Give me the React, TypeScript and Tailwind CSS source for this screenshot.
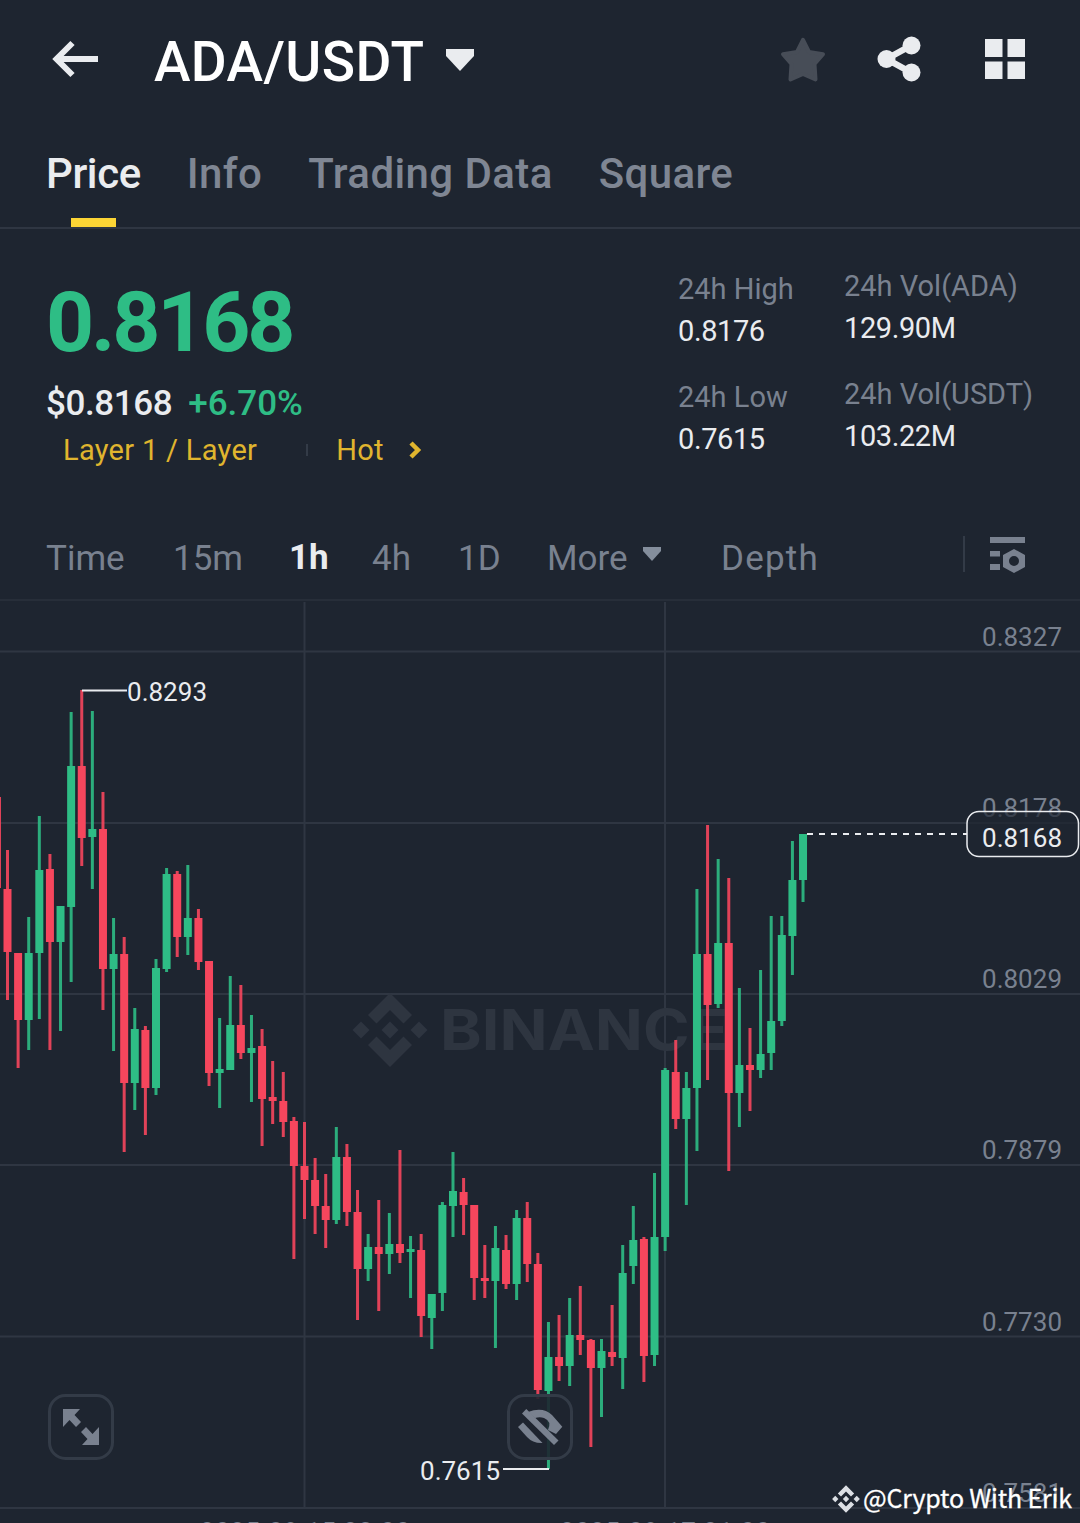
type Candle = [number, number, number, number, 0 | 1];

// [high, body top, body bottom, low, up] as chart y values
const candles: Candle[] = [
  [797, 797, 888, 888, 0],
  [850, 889, 952, 1000, 0],
  [953, 953, 1020, 1068, 0],
  [917, 953, 1020, 1050, 1],
  [816, 870, 953, 1019, 1],
  [854, 869, 942, 1050, 0],
  [906, 906, 942, 1031, 1],
  [712, 766, 907, 982, 1],
  [690, 766, 838, 866, 0],
  [711, 829, 837, 889, 1],
  [792, 829, 969, 1010, 0],
  [918, 954, 969, 1051, 1],
  [937, 954, 1083, 1152, 0],
  [1008, 1029, 1083, 1110, 1],
  [1026, 1030, 1088, 1135, 0],
  [959, 968, 1088, 1095, 1],
  [868, 874, 969, 972, 1],
  [871, 874, 937, 957, 0],
  [865, 918, 937, 955, 1],
  [909, 918, 962, 970, 0],
  [961, 961, 1073, 1086, 0],
  [1018, 1069, 1073, 1108, 1],
  [976, 1025, 1070, 1070, 1],
  [985, 1025, 1053, 1059, 0],
  [1015, 1048, 1053, 1102, 1],
  [1029, 1046, 1099, 1146, 0],
  [1061, 1097, 1101, 1124, 0],
  [1072, 1101, 1122, 1137, 0],
  [1117, 1121, 1166, 1259, 0],
  [1122, 1166, 1180, 1219, 0],
  [1158, 1180, 1206, 1234, 0],
  [1174, 1206, 1220, 1248, 0],
  [1127, 1157, 1220, 1224, 1],
  [1144, 1157, 1212, 1226, 0],
  [1190, 1212, 1269, 1320, 0],
  [1234, 1247, 1269, 1281, 1],
  [1200, 1247, 1254, 1311, 0],
  [1213, 1244, 1254, 1274, 1],
  [1150, 1244, 1253, 1263, 0],
  [1236, 1249, 1252, 1298, 1],
  [1234, 1250, 1316, 1337, 0],
  [1294, 1294, 1318, 1349, 1],
  [1202, 1205, 1293, 1311, 1],
  [1152, 1191, 1206, 1237, 1],
  [1178, 1192, 1205, 1235, 0],
  [1205, 1205, 1278, 1300, 0],
  [1245, 1278, 1281, 1298, 0],
  [1226, 1248, 1281, 1348, 1],
  [1235, 1250, 1284, 1289, 0],
  [1210, 1218, 1284, 1300, 1],
  [1202, 1218, 1264, 1282, 0],
  [1253, 1264, 1390, 1399, 0],
  [1322, 1357, 1391, 1469, 1],
  [1315, 1357, 1366, 1381, 0],
  [1298, 1335, 1366, 1386, 1],
  [1286, 1335, 1340, 1355, 0],
  [1339, 1340, 1368, 1447, 0],
  [1339, 1351, 1368, 1417, 1],
  [1305, 1352, 1357, 1366, 0],
  [1245, 1273, 1358, 1389, 1],
  [1206, 1240, 1266, 1284, 1],
  [1237, 1239, 1356, 1382, 0],
  [1173, 1237, 1355, 1366, 1],
  [1068, 1070, 1237, 1251, 1],
  [1040, 1072, 1119, 1129, 0],
  [1072, 1088, 1119, 1205, 1],
  [889, 954, 1088, 1151, 1],
  [825, 954, 1005, 1080, 0],
  [859, 943, 1004, 1008, 1],
  [878, 943, 1093, 1171, 0],
  [988, 1065, 1093, 1127, 1],
  [1028, 1065, 1070, 1111, 0],
  [970, 1054, 1070, 1078, 1],
  [916, 1021, 1053, 1070, 1],
  [916, 935, 1021, 1026, 1],
  [841, 880, 936, 975, 1],
  [834, 834, 880, 902, 1],
];

const gridLines = [
  { y: 651.5, label: '0.8327' },
  { y: 823, label: '0.8178' },
  { y: 994, label: '0.8029' },
  { y: 1165, label: '0.7879' },
  { y: 1336.5, label: '0.7730' },
  { y: 1508, label: '0.7581' },
];

const tabs = ['Price', 'Info', 'Trading Data', 'Square'];

const candleX = (i: number) => 7.5 + (i - 1) * 10.607;

const BinanceMark = () => (
  <>
    <path d="M0 -37 L22 -15 L13.5 -6.5 L0 -20 L-13.5 -6.5 L-22 -15 Z" />
    <path d="M0 37 L22 15 L13.5 6.5 L0 20 L-13.5 6.5 L-22 15 Z" />
    <path d="M0 -8.5 L8.5 0 L0 8.5 L-8.5 0 Z" />
    <path d="M-29 -8.5 L-20.5 0 L-29 8.5 L-37.5 0 Z" />
    <path d="M29 -8.5 L37.5 0 L29 8.5 L20.5 0 Z" />
  </>
);

const Header = () => (
  <header className="flex h-[118px] items-center pl-[52px] pr-[55px]">
    <svg width="46" height="38" viewBox="0 0 46 38" fill="none" stroke="#eaecef" strokeWidth="6">
      <path d="M46 19H5" />
      <path d="M20.5 3L4.5 19L20.5 35" />
    </svg>
    <h1 className="ml-[56px] mt-[6px] text-[55px] font-medium leading-none tracking-[0.4px] text-white">ADA/USDT</h1>
    <svg className="ml-[22px] mt-px" width="28" height="22" viewBox="0 0 28 22" fill="#eaecef">
      <path d="M0 0H28V7L14 22L0 7Z" />
    </svg>
    <div className="ml-auto flex items-center">
      <svg className="mt-[2px]" width="46" height="46" viewBox="0 0 46 46" fill="#474d57" stroke="#474d57" strokeWidth="4" strokeLinejoin="round">
        <path d="M23 2.800L29 15L43 17.300L34.500 27L35.500 42.500L23 37L10.500 42.500L11.500 27L3 17.300L17 15Z" />
      </svg>
      <svg className="ml-[51px]" width="44" height="46" viewBox="0 0 44 46" fill="#eaecef">
        <path d="M9.500 23L35 9M9.500 23L35 37" stroke="#eaecef" strokeWidth="6.500" />
        <circle cx="9.500" cy="23" r="9" />
        <circle cx="34.500" cy="9.500" r="9" />
        <circle cx="34.500" cy="36.500" r="9" />
      </svg>
      <svg className="ml-[64px]" width="40" height="40" viewBox="0 0 40 40" fill="#eaecef">
        <path d="M0 0H17.500V18H0ZM22.500 0H40V18H22.500ZM0 22.500H17.500V40H0ZM22.500 22.500H40V40H22.500Z" />
      </svg>
    </div>
  </header>
);

const Tabs = () => (
  <nav className="flex h-[111px] gap-[46px] border-b-2 border-[#2f3642] pl-[46px] text-[42px] font-medium leading-none tracking-[0.4px] text-[#7f8693]">
    {tabs.map((tab, i) => (
      <div key={tab} className="flex flex-col items-center justify-between pt-[35px]">
        <span className={i === 0 ? 'tracking-[-0.4px] text-[#eaecef]' : ''}>{tab}</span>
        {i === 0 && <span className="h-[9px] w-[45px] bg-[#fcd535]" />}
      </div>
    ))}
  </nav>
);

const Stat = ({ label, value }: { label: string; value: string }) => (
  <div className="h-[108px] text-[29px] leading-[42px]">
    <div className="text-[#79818f]">{label}</div>
    <div className="tracking-[-0.4px] text-[#eaecef]">{value}</div>
  </div>
);

const Summary = () => (
  <section className="flex h-[285px]">
    <div className="w-[678px] pl-[46px] pt-[47px]">
      <div className="text-[84px] font-bold leading-[94px] tracking-[-3.2px] text-[#2ebd85]">0.8168</div>
      <div className="mt-[13px] flex gap-[16px] text-[35px] font-medium leading-[42px]">
        <span className="tracking-[-0.4px] text-[#eaecef]">$0.8168</span>
        <span className="text-[#2ebd85]">+6.70%</span>
      </div>
      <div className="mt-[5px] flex items-center pl-[17px] text-[29px] leading-[40px] tracking-[0.3px] text-[#e0b52e]">
        <span>Layer 1 / Layer</span>
        <span className="ml-[49px] h-[12px] w-[2px] bg-[#333b47]" />
        <span className="ml-[28px]">Hot</span>
        <svg className="ml-[25px] -mt-px" width="13" height="18" viewBox="0 0 13 18" fill="none" stroke="#e0b52e" strokeWidth="4.500">
          <path d="M2 2L9 9L2 16" />
        </svg>
      </div>
    </div>
    <div className="w-[166px] pt-[39px]">
      <Stat label="24h High" value="0.8176" />
      <Stat label="24h Low" value="0.7615" />
    </div>
    <div className="pt-[36px]">
      <Stat label="24h Vol(ADA)" value="129.90M" />
      <Stat label="24h Vol(USDT)" value="103.22M" />
    </div>
  </section>
);

const Timeframes = () => (
  <section className="flex h-[87px] items-center border-b-2 border-[#272e39] pl-[46px] pt-[4px] text-[35px] leading-none text-[#79818f]">
    <span className="w-[127px]">Time</span>
    <span className="w-[116px]">15m</span>
    <span className="-mt-[2px] w-[83px] font-bold text-[#eaecef]">1h</span>
    <span className="w-[86px]">4h</span>
    <span className="w-[89px]">1D</span>
    <span className="w-[96px]">More</span>
    <svg className="-mt-[9px]" width="18" height="14" viewBox="0 0 18 14" fill="#848e9c">
      <path d="M0 0H18V4L9 14L0 4Z" />
    </svg>
    <span className="ml-[60px] tracking-[1.2px]">Depth</span>
    <span className="ml-auto -mt-[9px] h-[36px] w-[2px] bg-[#333b47]" />
    <svg className="-mt-[7px] ml-[25px] mr-[55px]" width="35" height="36" viewBox="0 0 35 36" fill="#79818f">
      <path d="M0 0H35V6H0ZM0 14H10V19.500H0ZM0 27H10V33H0Z" />
      <path fillRule="evenodd" d="M24 12L35 18V30L24 36L13 30V18ZM24 19A5 5 0 1 0 24 29A5 5 0 1 0 24 19Z" />
    </svg>
  </section>
);

const Chart = () => (
  <svg className="block" width="1080" height="922" viewBox="0 601 1080 922" fontFamily="Roboto, sans-serif">
    <g stroke="#2f3642" strokeWidth="2">
      {gridLines.map((line) => (
        <path key={line.label} d={`M0 ${line.y}H1080`} />
      ))}
      <path d="M304.500 602V1508M665 602V1508" />
    </g>

    <g fill="#2e3540">
      <g transform="translate(390 1030)">
        <BinanceMark />
      </g>
      <text x="440" y="1050" fontFamily="Inter, sans-serif" fontSize="57" fontWeight="700" textLength="288" lengthAdjust="spacingAndGlyphs">
        BINANCE
      </text>
    </g>

    {candles.map(([high, top, bottom, low, up], i) => (
      <g key={i} fill={up ? '#2ebd85' : '#f6465d'}>
        {i > 0 && <rect x={candleX(i) - 1.5} y={high} width="3" height={low - high} opacity="0.9" />}
        <rect x={candleX(i) - 4} y={top} width="8" height={bottom - top} />
      </g>
    ))}

    <g fill="#79818f" fontSize="26">
      {gridLines.map((line) => (
        <text key={line.label} x="982" y={line.y - 6} textLength="80">
          {line.label}
        </text>
      ))}
      <text x="200" y="1541" textLength="210">2025-08-15 23:00</text>
      <text x="560" y="1541" textLength="210">2025-08-17 21:00</text>
    </g>

    {/* high / low callouts */}
    <path d="M82 690.500H127M503 1469H549" stroke="#eaecef" strokeWidth="1.800" />
    <g fill="#eaecef" fontSize="26">
      <text x="127" y="701" textLength="80">0.8293</text>
      <text x="420" y="1480" textLength="80">0.7615</text>
    </g>

    {/* last price */}
    <path d="M807 834H967" stroke="#eaecef" strokeWidth="1.800" strokeDasharray="6 6" />
    <rect x="967" y="811.500" width="111.500" height="45" rx="12" fill="#1e2530" fillOpacity="0.7" stroke="#eaecef" strokeWidth="1.500" />
    <text x="982" y="847" fill="#eaecef" fontSize="26" textLength="80">0.8168</text>

    {/* expand */}
    <rect x="49.500" y="1395.500" width="63" height="63" rx="16" fill="#1e2530" stroke="#333b47" strokeWidth="3" />
    <g fill="#79818f">
      <path d="M63 1409H80L74.500 1415L81 1422L76 1427L69.500 1420L63 1427Z" />
      <path d="M99 1445H82L87.500 1439L81 1432L86 1427L92.500 1434L99 1427Z" />
    </g>

    {/* hide */}
    <rect x="508.500" y="1395.500" width="63" height="63" rx="16" fill="#1e2530" fillOpacity="0.9" stroke="#333b47" strokeWidth="3" />
    <g fill="#79818f">
      <path d="M526.300 1409L558.500 1440.500L554 1445L522 1413.500Z" />
      <path d="M528 1412Q543 1406.500 552 1415L562.300 1426.700L556 1434L548 1430Q552 1421 544 1418Q540 1416.500 535 1418Z" />
      <path d="M523 1422.500L542.500 1443Q533 1443.500 527 1437L518 1427Z" />
    </g>

    {/* author */}
    <g fill="#dcdfe4" transform="translate(846 1499) scale(0.37)">
      <BinanceMark />
    </g>
    <text x="863" y="1508" fill="#ffffff" fontSize="25" fontFamily="'Noto Sans CJK SC', sans-serif" stroke="#ffffff" strokeWidth="0.300" textLength="209">
      @Crypto With Erik
    </text>
  </svg>
);

const App = () => {
  return (
    <div className="h-[1523px] w-[1080px] overflow-hidden bg-[#1e2530] font-[Roboto,sans-serif]">
      <Header />
      <Tabs />
      <Summary />
      <Timeframes />
      <Chart />
    </div>
  );
};

export default App;
